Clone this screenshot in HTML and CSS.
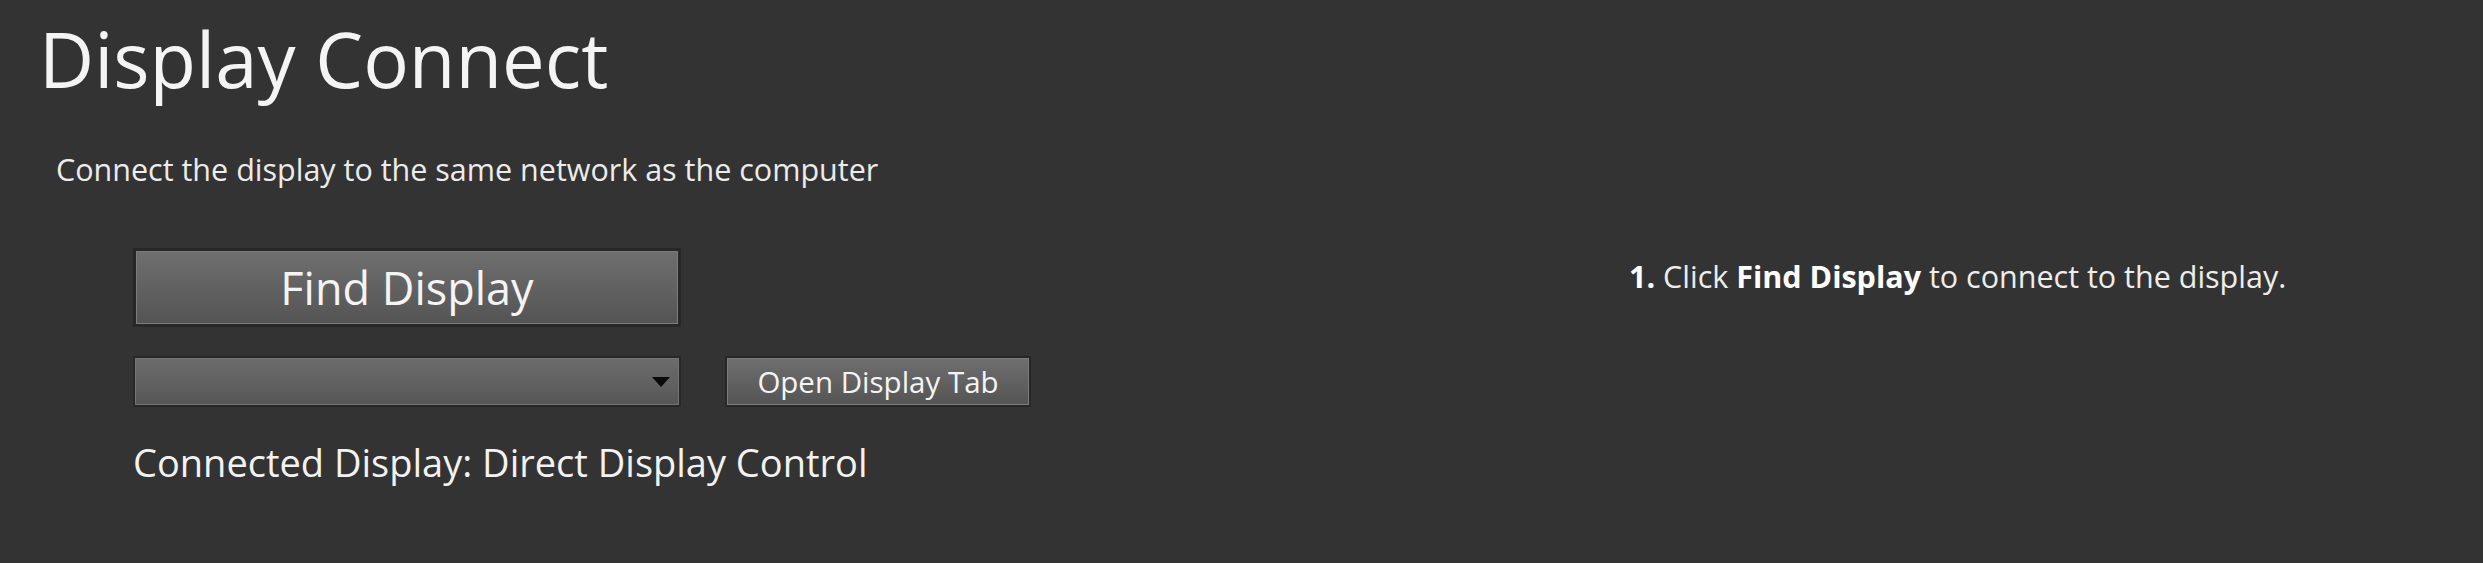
FILE: index.html
```html
<!DOCTYPE html>
<html lang="en">
<head>
<meta charset="utf-8">
<title>Display Connect</title>
<link rel="stylesheet" href="styles.css">
</head>
<body>
<div class="page">
  <h1 class="title">Display Connect</h1>
  <div class="content">
    <div class="left">
      <p class="subtitle">Connect the display to the same network as the computer</p>
      <div class="controls">
        <button class="btn btn-find">Find Display</button>
        <div class="row">
          <div class="select"><span class="arrow"></span></div>
          <button class="btn btn-tab">Open Display Tab</button>
        </div>
        <div class="status">Connected Display: Direct Display Control</div>
      </div>
    </div>
    <div class="right">
      <p class="step"><b>1.</b> Click <b>Find Display</b> to connect to the display.</p>
    </div>
  </div>
</div>
</body>
</html>
```

FILE: styles.css
```css
html, body {
  margin: 0;
  padding: 0;
  background: #333333;
  height: 100%;
}
body {
  font-family: "Open Sans", "Noto Sans", "Liberation Sans", sans-serif;
  color: #f2f2f2;
}
.page {
  padding: 11px 0 0 39px;
}
.title {
  margin: 0;
  font-size: 76px;
  line-height: 96px;
  font-weight: 400;
  color: #f4f4f4;
}
.content {
  display: grid;
  grid-template-columns: 1590px 1fr;
  margin-top: 44px;
}
.subtitle {
  margin: 0 0 0 17px;
  font-size: 30.5px;
  line-height: 36px;
  color: #ececec;
}
.controls {
  margin: 61px 0 0 94px;
  display: flex;
  flex-direction: column;
  align-items: flex-start;
}
.btn {
  font-family: inherit;
  color: #f4f4f4;
  background: linear-gradient(#6f6f6f, #545454);
  border: 3px solid #272727;
  box-shadow: inset 0 0 0 1px #7c7c7c;
  padding: 0;
  margin: 0;
  box-sizing: border-box;
  cursor: pointer;
}
.btn-find {
  width: 548px;
  height: 79px;
  font-size: 45px;
  line-height: 1;
}
.row {
  display: flex;
  gap: 44px;
  margin-top: 29px;
}
.select {
  width: 548px;
  height: 51px;
  box-sizing: border-box;
  border: 2px solid #282828;
  background: linear-gradient(#6c6c6c, #575757);
  box-shadow: inset 0 0 0 1px #747474;
  display: flex;
  align-items: center;
  justify-content: flex-end;
  padding-right: 9px;
}
.arrow {
  width: 0;
  height: 0;
  border-left: 9px solid transparent;
  border-right: 9px solid transparent;
  border-top: 10px solid #0a0a0a;
}
.btn-tab {
  width: 306px;
  height: 51px;
  font-size: 29.5px;
  line-height: 1;
  border-width: 2px;
}
.status {
  margin-top: 33px;
  font-size: 38px;
  line-height: 44px;
  color: #f2f2f2;
}
.right {
  padding-top: 107px;
}
.step {
  margin: 0;
  font-size: 30.5px;
  line-height: 36px;
  color: #ededed;
}
.step b {
  font-weight: 700;
  color: #ffffff;
}
```
